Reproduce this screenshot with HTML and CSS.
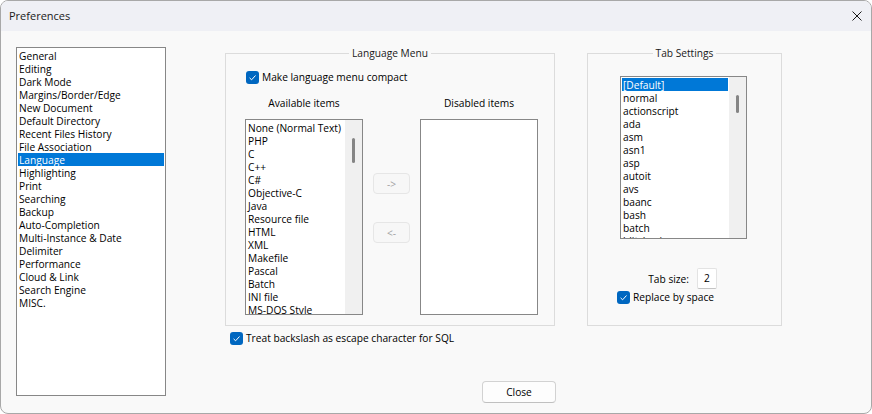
FILE: index.html
```html
<!DOCTYPE html>
<html lang="en">
<head>
<meta charset="utf-8">
<title>Preferences</title>
<link rel="stylesheet" href="styles.css">
</head>
<body>
<div class="window">
  <div class="titlebar">
    <span class="title">Preferences</span>
    <svg class="close-x" width="10" height="10" viewBox="0 0 10 10"><path d="M0.5 0.5 L9.5 9.5 M9.5 0.5 L0.5 9.5" stroke="#1a1a1a" stroke-width="1" fill="none"/></svg>
  </div>
  <div class="content">
    <div class="listbox sidebar">
      <div class="items">
        <div class="item">General</div>
        <div class="item">Editing</div>
        <div class="item">Dark Mode</div>
        <div class="item">Margins/Border/Edge</div>
        <div class="item">New Document</div>
        <div class="item">Default Directory</div>
        <div class="item">Recent Files History</div>
        <div class="item">File Association</div>
        <div class="item selected">Language</div>
        <div class="item">Highlighting</div>
        <div class="item">Print</div>
        <div class="item">Searching</div>
        <div class="item">Backup</div>
        <div class="item">Auto-Completion</div>
        <div class="item">Multi-Instance &amp; Date</div>
        <div class="item">Delimiter</div>
        <div class="item">Performance</div>
        <div class="item">Cloud &amp; Link</div>
        <div class="item">Search Engine</div>
        <div class="item">MISC.</div>
      </div>
    </div>
    <div class="main">
      <div class="groups">
        <fieldset class="group lang-group">
          <legend>Language Menu</legend>
          <label class="check compact">
            <svg class="box" width="13" height="13" viewBox="0 0 13 13"><rect width="13" height="13" rx="3" fill="#0067c0"/><path d="M3.6 6.9 L5.6 8.8 L9.5 4.5" fill="none" stroke="#fff" stroke-width="1"/></svg>
            <span>Make language menu compact</span>
          </label>
          <div class="columns">
            <div class="col">
              <div class="col-label">Available items</div>
              <div class="listbox lang-list">
                <div class="items">
                  <div class="item">None (Normal Text)</div>
                  <div class="item">PHP</div>
                  <div class="item">C</div>
                  <div class="item">C++</div>
                  <div class="item">C#</div>
                  <div class="item">Objective-C</div>
                  <div class="item">Java</div>
                  <div class="item">Resource file</div>
                  <div class="item">HTML</div>
                  <div class="item">XML</div>
                  <div class="item">Makefile</div>
                  <div class="item">Pascal</div>
                  <div class="item">Batch</div>
                  <div class="item">INI file</div>
                  <div class="item">MS-DOS Style</div>
                </div>
                <div class="vscroll"><div class="thumb lang-thumb"></div></div>
              </div>
            </div>
            <div class="movers">
              <button class="mover" disabled>-&gt;</button>
              <button class="mover" disabled>&lt;-</button>
            </div>
            <div class="col">
              <div class="col-label">Disabled items</div>
              <div class="listbox lang-list"></div>
            </div>
          </div>
        </fieldset>
        <fieldset class="group tab-group">
          <legend>Tab Settings</legend>
          <div class="listbox tab-list">
            <div class="items">
              <div class="item selected">[Default]</div>
              <div class="item">normal</div>
              <div class="item">actionscript</div>
              <div class="item">ada</div>
              <div class="item">asm</div>
              <div class="item">asn1</div>
              <div class="item">asp</div>
              <div class="item">autoit</div>
              <div class="item">avs</div>
              <div class="item">baanc</div>
              <div class="item">bash</div>
              <div class="item">batch</div>
              <div class="item">blitzbasic</div>
            </div>
            <div class="vscroll"><div class="thumb tab-thumb"></div></div>
          </div>
          <div class="tabsize">
            <span class="tabsize-label">Tab size:</span>
            <span class="num-input">2</span>
          </div>
          <label class="check replace">
            <svg class="box" width="13" height="13" viewBox="0 0 13 13"><rect width="13" height="13" rx="3" fill="#0067c0"/><path d="M3.6 6.9 L5.6 8.8 L9.5 4.5" fill="none" stroke="#fff" stroke-width="1"/></svg>
            <span>Replace by space</span>
          </label>
        </fieldset>
      </div>
      <label class="check sql">
        <svg class="box" width="13" height="13" viewBox="0 0 13 13"><rect width="13" height="13" rx="3" fill="#0067c0"/><path d="M3.6 6.9 L5.6 8.8 L9.5 4.5" fill="none" stroke="#fff" stroke-width="1"/></svg>
        <span>Treat backslash as escape character for SQL</span>
      </label>
      <div class="footer">
        <button class="btn">Close</button>
      </div>
    </div>
  </div>
</div>
</body>
</html>
```

FILE: styles.css
```css
* { box-sizing: border-box; }

html, body {
  margin: 0;
  padding: 0;
}

body {
  width: 872px;
  height: 414px;
  overflow: hidden;
  background: #ffffff;
  font-family: "Open Sans", "Noto Sans", sans-serif;
  font-size: 10.2px;
  color: #000;
}

.window {
  width: 872px;
  height: 414px;
  border: 1px solid #a8a8a8;
  border-radius: 8px;
  background: #f9f9f9;
  overflow: hidden;
  display: flex;
  flex-direction: column;
}

.titlebar {
  height: 30px;
  flex: none;
  background: #eff0f5;
  display: flex;
  align-items: center;
  justify-content: space-between;
  padding: 0 9px 0 8px;
}

.title {
  font-size: 11px;
  line-height: 14px;
  color: #1a1a1a;
}

.close-x { display: block; }

.content {
  flex: 1;
  display: flex;
  align-items: flex-start;
  padding: 16px 0 0 15px;
}

.listbox {
  background: #fff;
  border: 1px solid #878787;
  display: flex;
  overflow: hidden;
}

.items {
  flex: 1;
  min-width: 0;
  padding: 1px;
  overflow: hidden;
}

.item {
  height: 13px;
  line-height: 13px;
  padding: 1px 0 0 1px;
  white-space: nowrap;
}

.item.selected {
  background: #0078d7;
  color: #fff;
}

.sidebar {
  width: 150px;
  height: 349px;
}

.vscroll {
  width: 17px;
  flex: none;
  background: #f0f0f0;
  position: relative;
}

.thumb {
  position: absolute;
  left: 7px;
  width: 3px;
  border-radius: 2px;
  background: #858585;
}

.lang-thumb { top: 18px; height: 25px; }
.tab-thumb { top: 18px; height: 18px; }

.main {
  margin-left: 59px;
  display: flex;
  flex-direction: column;
}

.groups {
  display: flex;
  gap: 32px;
  align-items: stretch;
}

.group {
  margin: 0;
  padding: 0;
  border: 1px solid #dcdcdc;
  min-width: 0;
}

.group legend {
  margin: 0 auto;
  padding: 0 3px;
  line-height: 13px;
  color: #1a1a1a;
}

.lang-group { width: 330px; }
.tab-group { width: 195px; }

.check {
  display: flex;
  align-items: center;
  gap: 3px;
  height: 15px;
  line-height: 15px;
  white-space: nowrap;
}

.box { display: block; flex: none; }

.compact { margin: 10px 0 0 20px; }

.columns {
  display: flex;
  margin: 11px 0 10px 0;
  padding-left: 19px;
}

.col { width: 118px; }

.col-label {
  text-align: center;
  line-height: 15px;
  height: 15px;
}

.lang-list {
  margin-top: 8px;
  height: 196px;
}

.movers {
  width: 57px;
  display: flex;
  flex-direction: column;
  align-items: center;
  gap: 28px;
  padding-top: 77px;
}

.mover {
  width: 37px;
  height: 21px;
  padding: 0;
  font-family: inherit;
  font-size: 10.2px;
  color: #a2a2a2;
  background: #f7f7f7;
  border: 1px solid #e6e6e6;
  border-radius: 4px;
}

.tab-list {
  margin: 16px 0 0 32px;
  width: 127px;
  height: 163px;
}

.tabsize {
  display: flex;
  align-items: center;
  margin-top: 29px;
}

.tabsize-label {
  width: 101px;
  text-align: right;
}

.num-input {
  margin-left: 8px;
  width: 20px;
  height: 21px;
  line-height: 19px;
  text-align: center;
  background: #fff;
  border: 1px solid #e3e3e3;
  border-bottom-color: #c4c4c4;
  border-radius: 2px;
}

.replace { margin: 1px 0 0 29px; }

.sql { margin: 5px 0 0 5px; }

.footer {
  margin-top: 35px;
  padding-left: 257px;
}

.btn {
  width: 74px;
  height: 22px;
  padding: 0;
  font-family: inherit;
  font-size: 10.2px;
  color: #000;
  background: #fdfdfd;
  border: 1px solid #d2d2d2;
  border-bottom-color: #c0c0c0;
  border-radius: 4px;
}
```
